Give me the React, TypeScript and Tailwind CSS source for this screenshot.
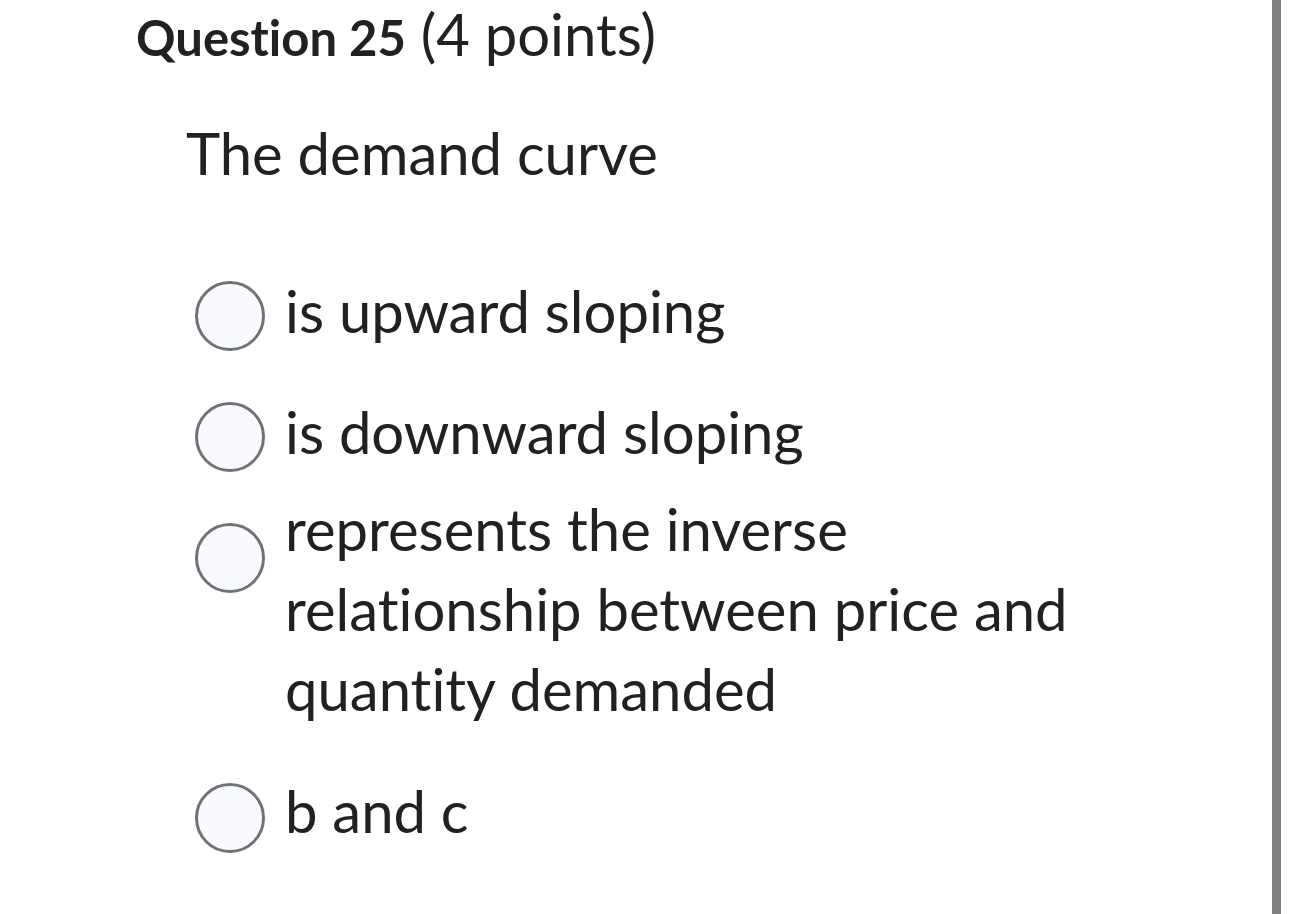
import React from "react";

const Radio: React.FC<{ className?: string }> = ({ className = "" }) => (
  <span
    className={`block h-[70px] w-[70px] shrink-0 rounded-full border-[3px] border-[#6f7377] bg-[#f9fafe] ${className}`}
  />
);

const App: React.FC = () => {
  return (
    <div className="flex h-[914px] w-[1290px] overflow-hidden bg-white font-['Lato','Noto_Sans',sans-serif] text-[#202122] [font-variant-ligatures:none]">
      <div className="flex-1 pl-[136px] pt-[4px]">
        <h2 className="text-[58px] leading-[60px]">
          <span className="text-[49px] font-bold">Question 25</span> (4 points)
        </h2>
        <div className="pl-[50px] pt-[46px] text-[58px] leading-[80px]">
          <p>The demand curve</p>
          <div className="mt-[78px] flex flex-col pl-[9px]">
            <label className="flex items-start gap-[20px]">
              <Radio className="mt-[10px]" />
              <span>is upward sloping</span>
            </label>
            <label className="mt-[41px] flex items-start gap-[20px]">
              <Radio className="mt-[10px]" />
              <span>is downward sloping</span>
            </label>
            <label className="mt-[17px] flex items-start gap-[20px]">
              <Radio className="mt-[34px]" />
              <span className="w-[810px]">
                represents the inverse relationship between price and quantity demanded
              </span>
            </label>
            <label className="mt-[42px] flex items-start gap-[20px]">
              <Radio className="mt-[12px]" />
              <span>b and c</span>
            </label>
          </div>
        </div>
      </div>
      <div className="w-[9px] bg-[#808080]" />
      <div className="w-[9px] bg-white" />
    </div>
  );
};

export default App;
